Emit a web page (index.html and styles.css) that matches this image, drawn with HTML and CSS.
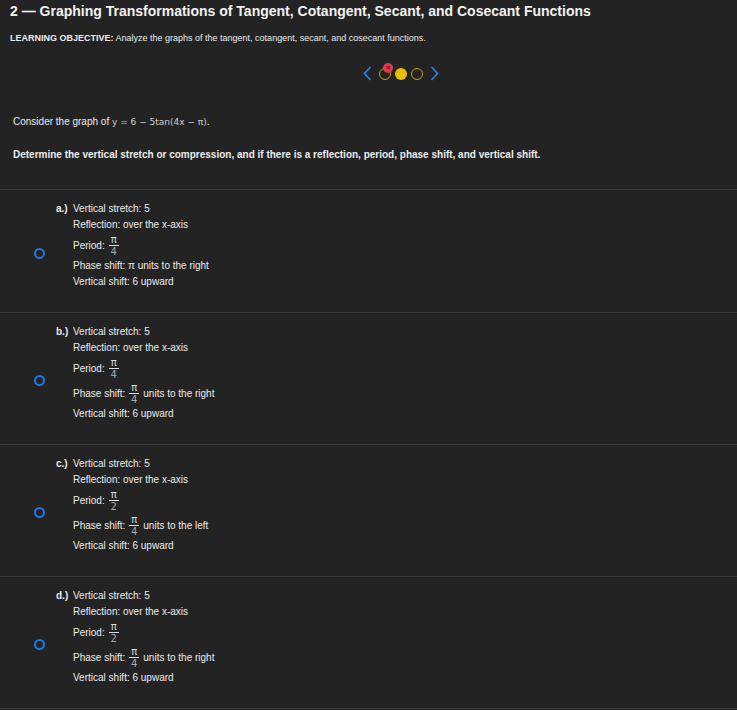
FILE: index.html
```html
<!DOCTYPE html>
<html lang="en">
<head>
  <meta charset="UTF-8" />
  <meta name="viewport" content="width=device-width, initial-scale=1.0"/>
  <title>Graphing Transformations</title>
  <link rel="stylesheet" href="styles.css">
</head>
<body>

  <header class="top">
    <h1>2 — Graphing Transformations of Tangent, Cotangent, Secant, and Cosecant Functions</h1>
    <p class="objective"><b>LEARNING OBJECTIVE:</b> Analyze the graphs of the tangent, cotangent, secant, and cosecant functions.</p>
  </header>

  <nav class="pager">
    <svg class="chev" width="9" height="15" viewBox="0 0 9 15"><path d="M7.5 1 L1.5 7.5 L7.5 14" fill="none" stroke="#2a7fd8" stroke-width="1.8"/></svg>
    <span class="dot ring"><span class="badge">&times;</span></span>
    <span class="dot full"></span>
    <span class="dot ring"></span>
    <svg class="chev" width="9" height="15" viewBox="0 0 9 15"><path d="M1.5 1 L7.5 7.5 L1.5 14" fill="none" stroke="#2a7fd8" stroke-width="1.8"/></svg>
  </nav>

  <section class="question">
    <p>Consider the graph of <span class="math">y = 6 − 5tan(4x − π)</span>.</p>
    <p class="task">Determine the vertical stretch or compression, and if there is a reflection, period, phase shift, and vertical shift.</p>
  </section>

  <ul class="options">
    <li class="option">
      <span class="radio"></span>
      <span class="letter">a.)</span>
      <div class="lines">
        <div>Vertical stretch: 5</div>
        <div>Reflection: over the x-axis</div>
        <div class="frac-line">Period: <span class="frac"><span class="num">π</span><span class="den">4</span></span></div>
        <div>Phase shift: π units to the right</div>
        <div>Vertical shift: 6 upward</div>
      </div>
    </li>
    <li class="option">
      <span class="radio"></span>
      <span class="letter">b.)</span>
      <div class="lines">
        <div>Vertical stretch: 5</div>
        <div>Reflection: over the x-axis</div>
        <div class="frac-line">Period: <span class="frac"><span class="num">π</span><span class="den">4</span></span></div>
        <div class="frac-line">Phase shift: <span class="frac"><span class="num">π</span><span class="den">4</span></span> units to the right</div>
        <div>Vertical shift: 6 upward</div>
      </div>
    </li>
    <li class="option">
      <span class="radio"></span>
      <span class="letter">c.)</span>
      <div class="lines">
        <div>Vertical stretch: 5</div>
        <div>Reflection: over the x-axis</div>
        <div class="frac-line">Period: <span class="frac"><span class="num">π</span><span class="den">2</span></span></div>
        <div class="frac-line">Phase shift: <span class="frac"><span class="num">π</span><span class="den">4</span></span> units to the left</div>
        <div>Vertical shift: 6 upward</div>
      </div>
    </li>
    <li class="option">
      <span class="radio"></span>
      <span class="letter">d.)</span>
      <div class="lines">
        <div>Vertical stretch: 5</div>
        <div>Reflection: over the x-axis</div>
        <div class="frac-line">Period: <span class="frac"><span class="num">π</span><span class="den">2</span></span></div>
        <div class="frac-line">Phase shift: <span class="frac"><span class="num">π</span><span class="den">4</span></span> units to the right</div>
        <div>Vertical shift: 6 upward</div>
      </div>
    </li>
  </ul>

</body>
</html>
```
FILE: styles.css
```css
body {margin: 0; font-family: "Liberation Sans", Arial, sans-serif; background-color: #232323; color: #ececec;}
p {margin: 0;}

.top {padding: 3px 10px 0;}
.top h1 {margin: 0; font-size: 14px; font-weight: bold; line-height: 17px; color: #f2f2f2;}
.objective {margin-top: 12px; font-size: 9px; line-height: 12px;}

.pager {display: flex; justify-content: center; align-items: center; gap: 4px; margin: 22px 0 0 65px; height: 15px;}
.chev {display: block; margin: 0 3px;}
.dot {width: 12px; height: 12px; border-radius: 50%; box-sizing: border-box; position: relative;}
.ring {border: 1.5px solid #c9a400;}
.full {background-color: #e7bd00;}
.badge {position: absolute; top: -6px; left: 3px; width: 10px; height: 10px; border-radius: 50%; background-color: #de3b4f; color: #6b1020; font-size: 8px; line-height: 10px; text-align: center; font-weight: bold;}

.question {padding: 35px 13px 0; font-size: 10px; line-height: 12px;}
.math {font-family: "DejaVu Sans", sans-serif; color: #cfcfcf; font-size: 9px;}
.task {margin-top: 21px; font-weight: bold;}

.options {list-style: none; margin: 28px 0 0; padding: 0; border-top: 1px solid #3a3a3a;}
.option {display: flex; align-items: center; padding: 13px 0 25px; border-bottom: 1px solid #3a3a3a; font-size: 10px;}
.radio {width: 11px; height: 11px; border: 2px solid #1d79e3; border-radius: 50%; box-sizing: border-box; margin: 16px 0 0 34px; flex-shrink: 0;}
.letter {align-self: flex-start; width: 17px; margin-left: 11px; font-weight: bold; line-height: 11px;}
.lines {display: flex; flex-direction: column; gap: 5px; line-height: 11px;}
.frac-line {display: flex; align-items: center; gap: 3px; height: 20px;}
.frac {display: inline-flex; flex-direction: column; align-items: center; font-family: "DejaVu Sans", sans-serif; font-size: 10px; line-height: 9px; padding: 0 1px;}
.num {border-bottom: 1px solid #e0e0e0; padding: 0 2px 1px; color: #dcdcdc;}
.den {color: #a8a8a8; padding-top: 1px;}
```
